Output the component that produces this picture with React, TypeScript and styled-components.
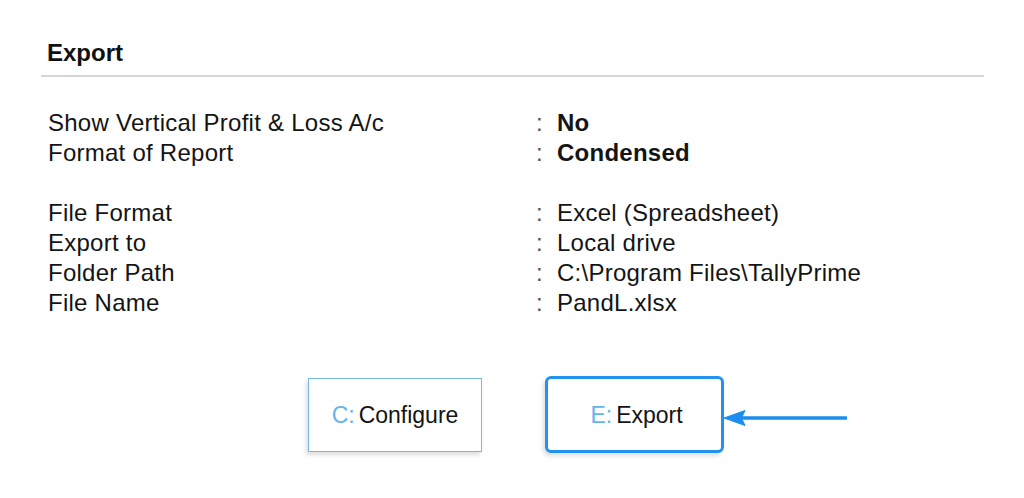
import React from "react";
import styled, { createGlobalStyle } from "styled-components";

const GlobalStyle = createGlobalStyle`
  html, body {
    margin: 0;
    padding: 0;
    background: #ffffff;
  }
  body {
    font-family: "Liberation Sans", Arial, sans-serif;
    color: #141414;
  }
`;

const Page = styled.div`
  width: 1024px;
  height: 498px;
  box-sizing: border-box;
  padding: 38px 40px 0 41px;
  background: #ffffff;
`;

const Heading = styled.div`
  font-size: 24px;
  font-weight: 700;
  line-height: 30px;
  padding: 0 0 7px 6px;
  border-bottom: 2px solid #d6d6d6;
  color: #111;
`;

const Fields = styled.div`
  margin-top: 31px;
  padding-left: 7px;
  display: flex;
  flex-direction: column;
  gap: 30px;
`;

const Group = styled.div`
  display: grid;
  grid-template-columns: 488px 21px 1fr;
  font-size: 24px;
  line-height: 30px;
  letter-spacing: 0.25px;
`;

const Label = styled.div`
  color: #141414;
  white-space: nowrap;
`;

const Colon = styled.div`
  color: #555;
`;

const Value = styled.div<{ $bold?: boolean }>`
  font-weight: ${(p) => (p.$bold ? 700 : 400)};
  color: #141414;
  white-space: nowrap;
`;

const ButtonBar = styled.div`
  margin-top: 58px;
  padding-left: 7px;
  display: flex;
  justify-content: center;
  align-items: center;
  gap: 63px;
`;

const Button = styled.div<{ $active?: boolean; $shift?: number }>`
  position: relative;
  box-sizing: border-box;
  width: ${(p) => (p.$active ? 179 : 174)}px;
  height: ${(p) => (p.$active ? 77 : 74)}px;
  border: ${(p) => (p.$active ? "3px solid #2391ee" : "1px solid #7ab8e6")};
  border-radius: ${(p) => (p.$active ? 6 : 0)}px;
  box-shadow: -2px 3px 4px rgba(0, 0, 0, 0.13);
  display: flex;
  align-items: center;
  justify-content: center;
  padding-left: ${(p) => p.$shift ?? 0}px;
  padding-top: 2px;
  font-size: 23px;
  color: #141414;
  background: #fff;
`;

const Key = styled.span`
  color: #66b4ec;
  margin-right: 4px;
`;

const Arrow = styled.svg`
  position: absolute;
  left: calc(100% + 2px);
  top: 30px;
`;

type Row = { label: string; value: string; bold?: boolean };

const group1: Row[] = [
  { label: "Show Vertical Profit & Loss A/c", value: "No", bold: true },
  { label: "Format of Report", value: "Condensed", bold: true },
];

const group2: Row[] = [
  { label: "File Format", value: "Excel (Spreadsheet)" },
  { label: "Export to", value: "Local drive" },
  { label: "Folder Path", value: "C:\\Program Files\\TallyPrime" },
  { label: "File Name", value: "PandL.xlsx" },
];

const FieldGroup = ({ rows }: { rows: Row[] }) => (
  <Group>
    {rows.map((r) => (
      <React.Fragment key={r.label}>
        <Label>{r.label}</Label>
        <Colon>:</Colon>
        <Value $bold={r.bold}>{r.value}</Value>
      </React.Fragment>
    ))}
  </Group>
);

export default function App() {
  return (
    <>
      <GlobalStyle />
      <Page>
        <Heading>Export</Heading>
        <Fields>
          <FieldGroup rows={group1} />
          <FieldGroup rows={group2} />
        </Fields>
        <ButtonBar>
          <Button $shift={0}>
            <Key>C:</Key>Configure
          </Button>
          <Button $active $shift={4}>
            <Key>E:</Key>Export
            <Arrow width="124" height="18" viewBox="0 0 124 18">
              <line x1="18" y1="9" x2="123" y2="9" stroke="#1c8df0" strokeWidth="3.5" strokeLinecap="round" />
              <path d="M1 9 L22 1.5 L18.5 9 L22 16.5 Z" fill="#1c8df0" stroke="#1c8df0" strokeWidth="1" strokeLinejoin="round" />
            </Arrow>
          </Button>
        </ButtonBar>
      </Page>
    </>
  );
}
